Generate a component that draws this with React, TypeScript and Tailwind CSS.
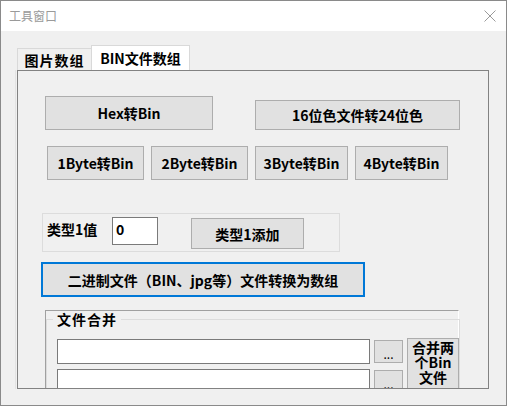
import React from 'react';

const btn =
  'flex shrink-0 items-center justify-center border border-[#adadad] bg-[#e1e1e1] text-[14px] font-bold text-black leading-none';

function Btn({ className, children }: { className: string; children: React.ReactNode }) {
  return <button type="button" className={`${btn} ${className}`}>{children}</button>;
}

export default function App() {
  return (
    <div className="flex h-[406px] w-[507px] flex-col border border-[#8a8a8a] bg-white font-['Noto_Sans_CJK_SC',sans-serif] text-black">
      {/* title bar */}
      <div className="flex h-[30px] shrink-0 items-center justify-between bg-white pl-[8px] pr-[10px]">
        <span className="text-[12px] leading-none text-[#9a9a9a]">工具窗口</span>
        <svg width="12" height="12" viewBox="0 0 12 12">
          <path d="M0.5 0.5 L11.5 11.5 M11.5 0.5 L0.5 11.5" stroke="#9a9a9a" strokeWidth="1" />
        </svg>
      </div>

      <div className="flex flex-1 flex-col bg-[#f0f0f0] pt-[14px]">
        {/* tabs */}
        <div className="ml-[16px] flex shrink-0 items-end">
          <div className="flex h-[22px] w-[74px] items-center justify-center border-t border-l border-[#d9d9d9] text-[14px] font-bold leading-none tracking-[1px]">
            图片数组
          </div>
          <div className="flex h-[25px] w-[99px] items-center justify-center border-t border-l border-r border-[#d9d9d9] bg-white text-[14px] font-bold leading-none">
            BIN文件数组
          </div>
        </div>

        {/* tab page */}
        <div className="ml-[14px] flex shrink-0 border-l border-[#e3e3e3] pl-[1px]">
          <div className="flex h-[319px] w-[472px] flex-col overflow-hidden border border-[#828282] bg-[#f0f0f0]">
            <div className="mt-[25px] ml-[27px] flex shrink-0 items-end">
              <Btn className="h-[34px] w-[168px]">Hex转Bin</Btn>
              <Btn className="ml-[42px] h-[30px] w-[205px]">16位色文件转24位色</Btn>
            </div>

            <div className="mt-[16px] ml-[29px] flex shrink-0 gap-[7px]">
              <Btn className="h-[34px] w-[97px]">1Byte转Bin</Btn>
              <Btn className="h-[34px] w-[97px]">2Byte转Bin</Btn>
              <Btn className="h-[34px] w-[93px]">3Byte转Bin</Btn>
              <Btn className="h-[34px] w-[93px]">4Byte转Bin</Btn>
            </div>

            <div className="mt-[33px] ml-[24px] flex h-[39px] w-[298px] shrink-0 items-start border border-[#dcdcdc]">
              <span className="mt-[5px] ml-[4px] w-[65px] text-[14px] font-bold leading-[20px]">类型1值</span>
              <div className="mt-[3px] h-[28px] w-[46px] border border-[#7a7a7a] bg-white pl-[3px] pt-[2px] text-[14px] font-semibold leading-[18px]">
                0
              </div>
              <Btn className="mt-[4px] ml-[33px] h-[31px] w-[113px]">类型1添加</Btn>
            </div>

            <button
              type="button"
              className="mt-[10px] ml-[23px] flex h-[35px] w-[324px] shrink-0 items-center justify-center border-2 border-[#0078d7] bg-[#e1e1e1] text-[14px] font-bold leading-none"
            >
              二进制文件（BIN、jpg等）文件转换为数组
            </button>

            {/* merge panel */}
            <div className="mt-[13px] ml-[27px] h-[110px] w-[414px] shrink-0 border-t border-l border-r border-t-[#a0a0a0] border-l-[#a0a0a0] border-r-white">
              <fieldset className="h-[120px] border border-[#dcdcdc] px-0">
                <legend className="ml-[6px] px-[4px] text-[14px] font-bold leading-[16px] tracking-[1px]">文件合并</legend>
                <div className="flex pt-[12px] pl-[10px]">
                  <div className="flex flex-col gap-[5px]">
                    <div className="flex items-start">
                      <div className="h-[25px] w-[313px] border border-[#7a7a7a] bg-white" />
                      <Btn className="mt-[1px] ml-[4px] h-[23px] w-[29px] pt-[4px] !text-[12px] !font-normal">...</Btn>
                    </div>
                    <div className="flex items-start">
                      <div className="h-[25px] w-[313px] border border-[#7a7a7a] bg-white" />
                      <Btn className="mt-[1px] ml-[4px] h-[23px] w-[29px] pt-[4px] !text-[12px] !font-normal">...</Btn>
                    </div>
                  </div>
                  <button
                    type="button"
                    className="-mt-[1px] ml-[4px] flex h-[70px] w-[52px] flex-col items-center border border-[#adadad] bg-[#e1e1e1] pt-[1px] text-[14px] font-bold leading-[15px]"
                  >
                    <span className="block">合并两</span>
                    <span className="block">个Bin</span>
                    <span className="block">文件</span>
                  </button>
                </div>
              </fieldset>
            </div>
          </div>
        </div>
      </div>
    </div>
  );
}
